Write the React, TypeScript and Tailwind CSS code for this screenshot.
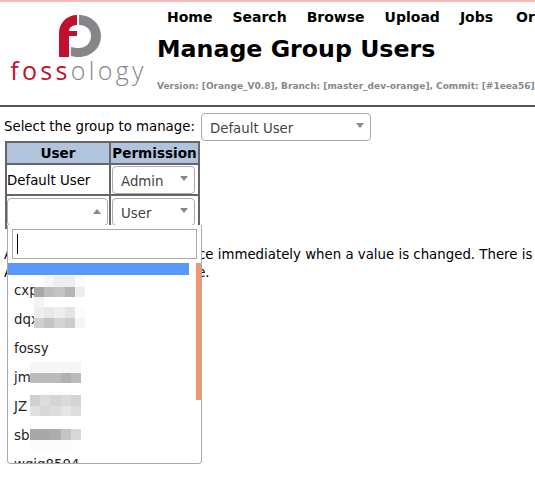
const cx = "transparent";

const rows: { label: string; left?: number; top?: number; cells?: string[][] }[] = [
  {
    label: "cxp",
    left: 26,
    top: 0,
    cells: [
      [cx, "#f6f6f6", "#eeeeee", "#eeeeee", "#fafafa"],
      ["#a8a8a8", "#bdbdbd", "#c4c4c4", "#b5b5b5", "#eeeeee"],
      ["#f4f4f4", cx, cx, cx, cx],
    ],
  },
  {
    label: "dqx",
    left: 26,
    top: 2,
    cells: [
      ["#eeeeee", "#e8e8e8", "#eeeeee", "#e4e4e4", "#fcfcfc"],
      ["#d0d0d0", "#c4c4c4", "#d4d4d4", "#cccccc", "#f5f5f5"],
    ],
  },
  { label: "fossy" },
  {
    label: "jm",
    left: 22,
    top: -1,
    cells: [
      ["#f6f6f6", "#f6f6f6", "#f7f7f7", "#f6f6f6", "#f5f5f5"],
      ["#bbbbbb", "#bbbbbb", "#bbbbbb", "#b0b0b0", "#bbbbbb"],
    ],
  },
  {
    label: "JZ",
    left: 22,
    top: 3,
    cells: [
      ["#d0d0d0", "#dcdcdc", "#d4d4d4", "#dadada", "#d4d4d4"],
      ["#e0e0e0", "#d8d8d8", "#dcdcdc", "#e6e6e6", "#dedede"],
    ],
  },
  {
    label: "sb",
    left: 22,
    top: 8,
    cells: [
      ["#a8a8a8", "#a8a8a8", "#adadad", "#c4c4c4", "#d8d8d8"],
      ["#fcfcfc", "#fcfcfc", "#fcfcfc", "#fcfcfc", "#fdfdfd"],
    ],
  },
  { label: "wqjq8504" },
];

function Logo() {
  return (
    <div className="flex w-[157px] shrink-0 flex-col items-center pt-[13px]">
      <svg width="44" height="43" viewBox="58 15 44 43" className="ml-[2px]">
        <path d="M59 57V33C59 23 67 15 77 15V25C72 25 69 28 69 31H77V36H69V57Z" fill="#c0102e" />
        <path d="M79 15C91 15 101 24 101 36C101 48 91 57 79 57C76 57 73 56.5 71 56V47C73 47.5 76 48 79 48C86 48 91 43 91 36C91 29 86 25 79 25Z" fill="#87858a" />
      </svg>
      <div className="mt-[-3px] font-['Open_Sans',sans-serif] text-[25px] leading-[30px] font-light tracking-[3.3px]">
        <span className="font-normal text-[#c0102e]">foss</span>
        <span className="text-[#87858a]">ology</span>
      </div>
    </div>
  );
}

function FakeSelect({ label, up, className }: { label: string; up?: boolean; className: string }) {
  return (
    <div className={`flex items-center justify-between rounded border border-[#aaaaaa] bg-white pl-2 pr-[6px] text-[13.33px] text-[#444444] ${className}`}>
      <span className="pt-[4px]">{label}</span>
      <span className={up ? "mb-[1px] border-x-[4px] border-b-[5px] border-x-transparent border-b-[#888888]" : "mb-[3px] border-x-[4px] border-t-[5px] border-x-transparent border-t-[#888888]"} />
    </div>
  );
}

export default function App() {
  return (
    <div className="relative h-[480px] w-[535px] overflow-hidden bg-white font-['DejaVu_Sans',sans-serif] text-[13.33px] text-black">
      <div className="h-[2px] bg-[#ffb6b6]" />
      <div className="flex h-[103px]">
        <Logo />
        <div className="min-w-0 flex-1 overflow-hidden">
          <div className="flex gap-[20px] pt-[7px] pl-[10px] text-[14px] leading-[17px] font-bold whitespace-nowrap">
            <span>Home</span>
            <span>Search</span>
            <span>Browse</span>
            <span>Upload</span>
            <span>Jobs</span>
            <span className="ml-[3px]">Organize</span>
          </div>
          <div className="mt-[8px] text-[23.7px] leading-[30px] font-bold whitespace-nowrap">Manage Group Users</div>
          <div className="mt-[17px] text-[9px] leading-[11px] font-bold whitespace-nowrap text-[#888888]">
            Version: [Orange_V0.8], Branch: [master_dev-orange], Commit: [#1eea56]
          </div>
        </div>
      </div>
      <div className="h-[2px] bg-[#555555]" />
      <div className="flex h-[34px] items-center gap-[6px] pt-[6px] pl-1">
        <span className="pb-[1px]">Select the group to manage:</span>
        <FakeSelect label="Default User" className="h-[28px] w-[170px]" />
      </div>
      <table className="ml-[5px] w-[195px] table-fixed border-separate border-spacing-0 border border-[#666666]">
        <tbody>
          <tr className="h-[22px] bg-[#b0c4de] text-[13.6px] font-bold">
            <td className="w-[104px] border border-[#666666] text-center">User</td>
            <td className="w-[89px] border border-[#666666] text-center">Permission</td>
          </tr>
          <tr className="h-[31px]">
            <td className="border border-[#666666] pt-[2px]">Default User</td>
            <td className="border border-[#666666] pr-[3px] pl-[1px]">
              <FakeSelect label="Admin" className="h-[28px]" />
            </td>
          </tr>
          <tr className="h-[33px]">
            <td className="border border-[#666666] pt-[1px] pr-[1px]">
              <FakeSelect label="" up className="h-[28px]" />
            </td>
            <td className="border border-[#666666] pt-[1px] pr-[3px] pl-[1px]">
              <FakeSelect label="User" className="h-[28px]" />
            </td>
          </tr>
        </tbody>
      </table>
      <div className="mt-[17px] pl-1 leading-[18px] whitespace-nowrap">
        <div>All user changes will take place immediately when a value is changed. There is</div>
        <div>Add new users on the last line.</div>
      </div>

      <div className="absolute top-[225px] left-[7px] h-[239px] w-[195px] overflow-hidden rounded-b border border-t-0 border-[#aaaaaa] bg-white">
        <div className="mx-[4px] mt-[4px] flex h-[30px] items-center border border-[#aaaaaa] pl-[4px]">
          <span className="h-[20px] w-[1px] bg-black" />
        </div>
        <div className="relative mt-[4px]">
          <div className="absolute top-0 right-0 h-[137px] w-[5px] bg-[#f5956f]" />
          <div className="mr-[12px] h-[12px] bg-[#5897fb]" />
          <div className="pt-[1px]">
            {rows.map((row) => (
              <div key={row.label} className="relative h-[29px] pl-[6px] leading-[29px] text-[#222222]">
                {row.label}
                {row.cells && (
                  <div className="absolute flex flex-col" style={{ left: row.left, top: row.top }}>
                    {row.cells.map((cells, i) => (
                      <div key={i} className="flex">
                        {cells.map((c, j) => (
                          <div key={j} className="h-[10.5px] w-[10.2px]" style={{ background: c }} />
                        ))}
                      </div>
                    ))}
                  </div>
                )}
              </div>
            ))}
          </div>
        </div>
      </div>
    </div>
  );
}
